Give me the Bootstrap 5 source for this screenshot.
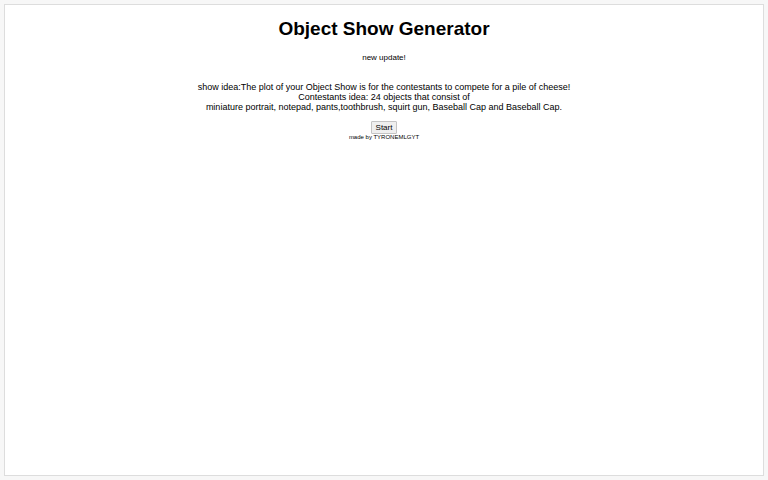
<!DOCTYPE html>
<html lang="en">
<head>
<meta charset="utf-8">
<meta name="viewport" content="width=device-width, initial-scale=1">
<title>Object Show Generator</title>
<link href="https://cdn.jsdelivr.net/npm/bootstrap@5.3.0/dist/css/bootstrap.min.css" rel="stylesheet">
<style>
body { background: #f7f7f7; color: #000; font-family: "Liberation Sans", Arial, sans-serif; padding: 4px; }
.sheet { background: #fff; border: 1px solid #ddd; padding-top: 12px; }
.title { font-size: 19px; line-height: 24px; margin-bottom: 12px; }
.update { font-size: 8px; line-height: 10px; margin-bottom: 19px; }
.ideas { font-size: 9px; line-height: 10px; margin-bottom: 9px; }
.start { font-size: 8px; line-height: 10px; padding: 1px 4px 0; color: #000; background: #efefef; border: 1px solid #c4c4c4; border-radius: 1px; }
.start:hover { background: #e5e5e5; }
.credit { font-size: 6px; line-height: 6px; }
</style>
</head>
<body class="min-vh-100 d-flex">
<main class="sheet flex-fill d-flex flex-column align-items-center text-center">
<h1 class="title fw-bold">Object Show Generator</h1>
<p class="update">new update!</p>
<p class="ideas">show idea:The plot of your Object Show is for the contestants to compete for a pile of cheese!<br>Contestants idea: 24 objects that consist of<br>miniature portrait, notepad, pants,toothbrush, squirt gun, Baseball Cap and Baseball Cap.</p>
<button type="button" class="start">Start</button>
<p class="credit mb-0">made by TYRONEMLGYT</p>
</main>
<script src="https://cdn.jsdelivr.net/npm/bootstrap@5.3.0/dist/js/bootstrap.bundle.min.js"></script>
</body>
</html>
